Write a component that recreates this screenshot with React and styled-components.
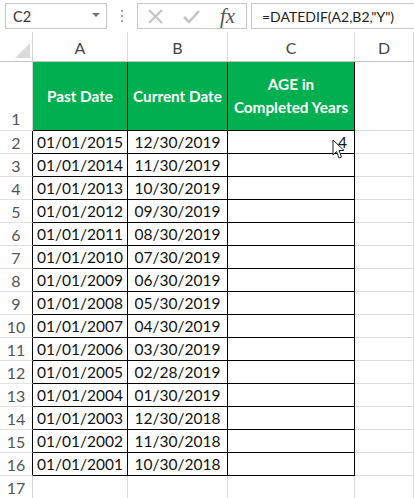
import React from "react";
import styled, { createGlobalStyle } from "styled-components";

const GlobalStyle = createGlobalStyle`
	html, body {
		margin: 0;
		padding: 0;
		background: #ffffff;
		overflow: hidden;
	}
	body {
		font-family: Lato, "Liberation Sans", sans-serif;
	}
`;

const rows = [
	["01/01/2015", "12/30/2019", "4"],
	["01/01/2014", "11/30/2019", ""],
	["01/01/2013", "10/30/2019", ""],
	["01/01/2012", "09/30/2019", ""],
	["01/01/2011", "08/30/2019", ""],
	["01/01/2010", "07/30/2019", ""],
	["01/01/2009", "06/30/2019", ""],
	["01/01/2008", "05/30/2019", ""],
	["01/01/2007", "04/30/2019", ""],
	["01/01/2006", "03/30/2019", ""],
	["01/01/2005", "02/28/2019", ""],
	["01/01/2004", "01/30/2019", ""],
	["01/01/2003", "12/30/2018", ""],
	["01/01/2002", "11/30/2018", ""],
	["01/01/2001", "10/30/2018", ""],
];

const Page = styled.div`
	width: 414px;
	height: 498px;
	overflow: hidden;
	background: #fff;
`;

const FormulaBar = styled.div`
	height: 32px;
	display: flex;
	align-items: flex-start;
	padding: 3px 0 0 5px;
	box-sizing: border-box;
`;

const NameBox = styled.div`
	width: 102px;
	height: 26px;
	box-sizing: border-box;
	border: 1px solid #c8c8c8;
	display: flex;
	align-items: center;
	justify-content: space-between;
	padding: 0 6px 0 7px;
	font-size: 14.5px;
	color: #333;
`;

const Caret = styled.span`
	width: 0;
	height: 0;
	border-left: 4px solid transparent;
	border-right: 4px solid transparent;
	border-top: 4px solid #777;
	margin-top: -2px;
`;

const Dots = styled.div`
	width: 30px;
	height: 26px;
	display: flex;
	flex-direction: column;
	align-items: center;
	justify-content: center;
	gap: 3px;

	span {
		width: 2px;
		height: 2px;
		background: #a8a8a8;
	}
`;

const ToolBox = styled.div`
	width: 110px;
	height: 26px;
	box-sizing: border-box;
	border: 1px solid #c8c8c8;
	display: flex;
	align-items: center;
	padding: 0 8px 0 9px;
	gap: 19px;
`;

const Fx = styled.span`
	font-family: "Liberation Serif", "DejaVu Serif", serif;
	font-style: italic;
	font-size: 21px;
	color: #555;
	margin-left: 1px;
	line-height: 1;
`;

const FormulaInput = styled.div`
	flex: 1;
	height: 26px;
	margin-left: 4px;
	box-sizing: border-box;
	border: 1px solid #c8c8c8;
	border-right: none;
	display: flex;
	align-items: center;
	padding-left: 10px;
	font-size: 14px;
	color: #222;
	white-space: nowrap;
`;

const Sheet = styled.div`
	display: grid;
	grid-template-columns: 33px 95px 100px 127px 1fr;
	grid-template-rows: 30px 69px repeat(16, 23px);
	font-size: 15.5px;
`;

const Corner = styled.div`
	border-right: 1px solid #d4d4d4;
	border-bottom: 1px solid #c4c4c4;
	position: relative;

	&::after {
		content: "";
		position: absolute;
		right: 2px;
		bottom: 3px;
		width: 0;
		height: 0;
		border-left: 15px solid transparent;
		border-bottom: 15px solid #dcdcdc;
	}
`;

const ColHead = styled.div`
	border-right: 1px solid #dadada;
	border-bottom: 1px solid #c4c4c4;
	display: flex;
	align-items: center;
	justify-content: center;
	color: #444;
	font-size: 16px;
	padding-top: 2px;
`;

const RowHead = styled.div`
	border-right: 1px solid ${(p) => (p.$edge ? "#000" : "#d4d4d4")};
	border-bottom: 1px solid #e2e2e2;
	display: flex;
	align-items: ${(p) => (p.$bottom ? "flex-end" : "center")};
	justify-content: center;
	color: #555;
	font-size: 16px;
	padding-bottom: ${(p) => (p.$bottom ? "2px" : "0")};
`;

const HeadCell = styled.div`
	background: #00b050;
	border-right: 1px solid #000;
	border-bottom: 1px solid #000;
	color: #fff;
	font-weight: 700;
	font-size: 15.3px;
	line-height: 23px;
	display: flex;
	align-items: center;
	justify-content: center;
	text-align: center;
`;

const Cell = styled.div`
	position: relative;
	border-right: 1px solid ${(p) => (p.$boxed ? "#000" : "#dcdcdc")};
	border-bottom: 1px solid ${(p) => (p.$boxed ? "#000" : "#dcdcdc")};
	display: flex;
	align-items: center;
	justify-content: ${(p) => (p.$right ? "flex-end" : "center")};
	padding: ${(p) => (p.$right ? "0 7px 0 0" : "0")};
	color: #111;
	white-space: nowrap;
`;

const Pointer = styled.svg`
	position: absolute;
	left: 104px;
	top: 8px;
`;

const CursorArrow = () => (
	<Pointer width="14" height="21" viewBox="0 0 14 21">
		<path
			d="M1 1 L1 16 L4.5 12.5 L7 19 L9.5 18 L7 11.5 L12 11.5 Z"
			fill="#fff"
			stroke="#222"
			strokeWidth="1"
			strokeLinejoin="round"
		/>
	</Pointer>
);

const CrossIcon = () => (
	<svg width="17" height="15" viewBox="0 0 17 15">
		<path d="M2 1 L15 14 M15 1 L2 14" stroke="#c4c4c4" strokeWidth="2" />
	</svg>
);

const CheckIcon = () => (
	<svg width="17" height="15" viewBox="0 0 17 15">
		<path
			d="M1 8 L6 13 L16 2"
			stroke="#c4c4c4"
			strokeWidth="2.5"
			fill="none"
		/>
	</svg>
);

export default function App() {
	return (
		<Page>
			<GlobalStyle />
			<FormulaBar>
				<NameBox>
					C2
					<Caret />
				</NameBox>
				<Dots>
					<span />
					<span />
					<span />
				</Dots>
				<ToolBox>
					<CrossIcon />
					<CheckIcon />
					<Fx>fx</Fx>
				</ToolBox>
				<FormulaInput>=DATEDIF(A2,B2,"Y")</FormulaInput>
			</FormulaBar>
			<Sheet>
				<Corner />
				<ColHead>A</ColHead>
				<ColHead>B</ColHead>
				<ColHead>C</ColHead>
				<ColHead>D</ColHead>

				<RowHead $bottom>1</RowHead>
				<HeadCell>Past Date</HeadCell>
				<HeadCell>Current Date</HeadCell>
				<HeadCell>
					AGE in
					<br />
					Completed Years
				</HeadCell>
				<Cell />

				{rows.map(([past, current, age], i) => (
					<React.Fragment key={past}>
						<RowHead $edge>{i + 2}</RowHead>
						<Cell $boxed>{past}</Cell>
						<Cell $boxed>{current}</Cell>
						<Cell $boxed $right>
							{age}
							{i === 0 && <CursorArrow />}
						</Cell>
						<Cell />
					</React.Fragment>
				))}

				<RowHead>17</RowHead>
				<Cell />
				<Cell />
				<Cell />
				<Cell />
			</Sheet>
		</Page>
	);
}
